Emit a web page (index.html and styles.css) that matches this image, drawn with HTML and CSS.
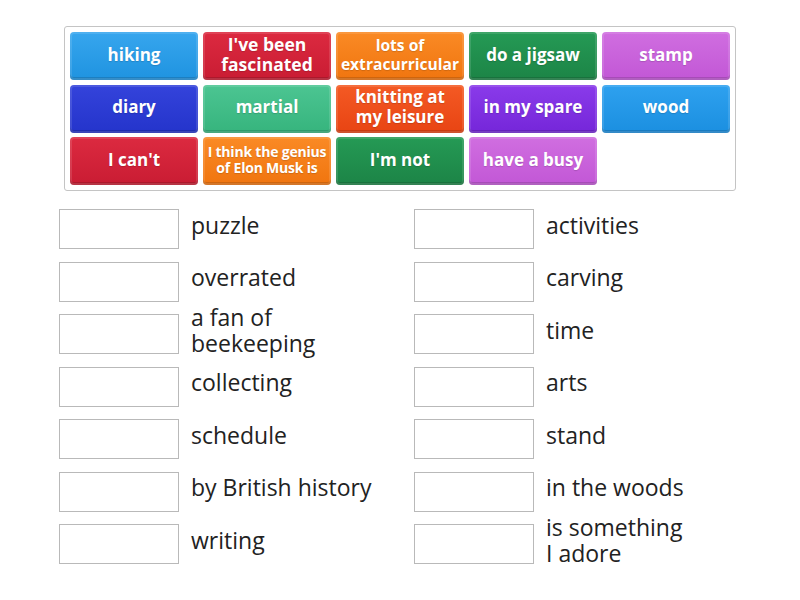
FILE: index.html
```html
<!DOCTYPE html>
<html>
<head>
<meta charset="utf-8">
<link rel="stylesheet" href="styles.css">
</head>
<body>
<div class="bank">
  <div class="tile c-sky"><span>hiking</span></div>
  <div class="tile c-red big"><span>I've been<br>fascinated</span></div>
  <div class="tile c-orange small"><span>lots of<br>extracurricular</span></div>
  <div class="tile c-green"><span>do a jigsaw</span></div>
  <div class="tile c-pink"><span>stamp</span></div>
  <div class="tile c-blue"><span>diary</span></div>
  <div class="tile c-mint"><span>martial</span></div>
  <div class="tile c-redorange"><span>knitting at<br>my leisure</span></div>
  <div class="tile c-violet"><span>in my spare</span></div>
  <div class="tile c-sky2"><span>wood</span></div>
  <div class="tile c-red"><span>I can't</span></div>
  <div class="tile c-orange tiny"><span>I think the genius<br>of Elon Musk is</span></div>
  <div class="tile c-green"><span>I'm not</span></div>
  <div class="tile c-pink"><span>have a busy</span></div>
</div>
<div class="targets">
  <div class="row"><div class="box"></div><div class="label">puzzle</div></div>
  <div class="row"><div class="box"></div><div class="label">activities</div></div>
  <div class="row"><div class="box"></div><div class="label">overrated</div></div>
  <div class="row"><div class="box"></div><div class="label">carving</div></div>
  <div class="row"><div class="box"></div><div class="label">a fan of<br>beekeeping</div></div>
  <div class="row"><div class="box"></div><div class="label">time</div></div>
  <div class="row"><div class="box"></div><div class="label">collecting</div></div>
  <div class="row"><div class="box"></div><div class="label">arts</div></div>
  <div class="row"><div class="box"></div><div class="label">schedule</div></div>
  <div class="row"><div class="box"></div><div class="label">stand</div></div>
  <div class="row"><div class="box"></div><div class="label">by British history</div></div>
  <div class="row"><div class="box"></div><div class="label">in the woods</div></div>
  <div class="row"><div class="box"></div><div class="label">writing</div></div>
  <div class="row"><div class="box"></div><div class="label">is something<br>I adore</div></div>
</div>
</body>
</html>
```
FILE: styles.css
```css
html, body {
  margin: 0;
  padding: 0;
  background: #ffffff;
  font-family: "Open Sans", "Liberation Sans", sans-serif;
}
body {
  padding-top: 26px;
}
.bank {
  box-sizing: border-box;
  margin-left: 64px;
  width: 672px;
  height: 165px;
  border: 1px solid #c4c4c4;
  border-radius: 3px;
  padding: 5px 5px;
  display: grid;
  grid-template-columns: repeat(5, 128px);
  grid-auto-rows: 48px;
  column-gap: 5px;
  row-gap: 4.5px;
}
.tile {
  box-sizing: border-box;
  border-radius: 4px;
  display: flex;
  align-items: center;
  justify-content: center;
  text-align: center;
  color: #ffffff;
  font-weight: 700;
  font-size: 17px;
  line-height: 20px;
  padding: 0 2px 3px;
  white-space: nowrap;
  box-shadow: inset 0 0 0 2px rgba(255,255,255,0.12), inset 0 -3px 0 rgba(0,0,0,0.14);
  text-shadow: 0 1px 1px rgba(0,0,0,0.15);
}
.tile.big {
  font-size: 17.5px;
  line-height: 19.5px;
}
.tile.small {
  font-size: 15.6px;
  line-height: 19px;
}
.tile.tiny {
  font-size: 14px;
  line-height: 16px;
  padding: 0 0 3px;
  letter-spacing: -0.2px;
}
.c-sky { background: linear-gradient(#37a6ee, #1f93e0); }
.c-sky2 { background: linear-gradient(#2ea1ef, #1b8fe0); }
.c-red { background: linear-gradient(#dc2a40, #c91c33); }
.c-orange { background: linear-gradient(#fa8a25, #f0750f); }
.c-green { background: linear-gradient(#259a55, #1c8446); }
.c-pink { background: linear-gradient(#d06ee0, #c257d6); }
.c-blue { background: linear-gradient(#3443db, #2434cb); }
.c-mint { background: linear-gradient(#4cc592, #36b47d); }
.c-redorange { background: linear-gradient(#f45a24, #e84413); }
.c-violet { background: linear-gradient(#8a3bea, #7526d9); }

.targets {
  margin-top: 18px;
  margin-left: 59px;
  display: grid;
  grid-template-columns: 355px 300px;
  grid-auto-rows: 40px;
  row-gap: 12.5px;
}
.row {
  display: flex;
  align-items: center;
  gap: 12px;
}
.box {
  box-sizing: border-box;
  flex: 0 0 120px;
  height: 40px;
  border: 1px solid #b9b9b9;
  background: #ffffff;
}
.label {
  font-size: 23px;
  line-height: 26.5px;
  color: #222222;
  white-space: nowrap;
  margin-bottom: 8px;
}
```
